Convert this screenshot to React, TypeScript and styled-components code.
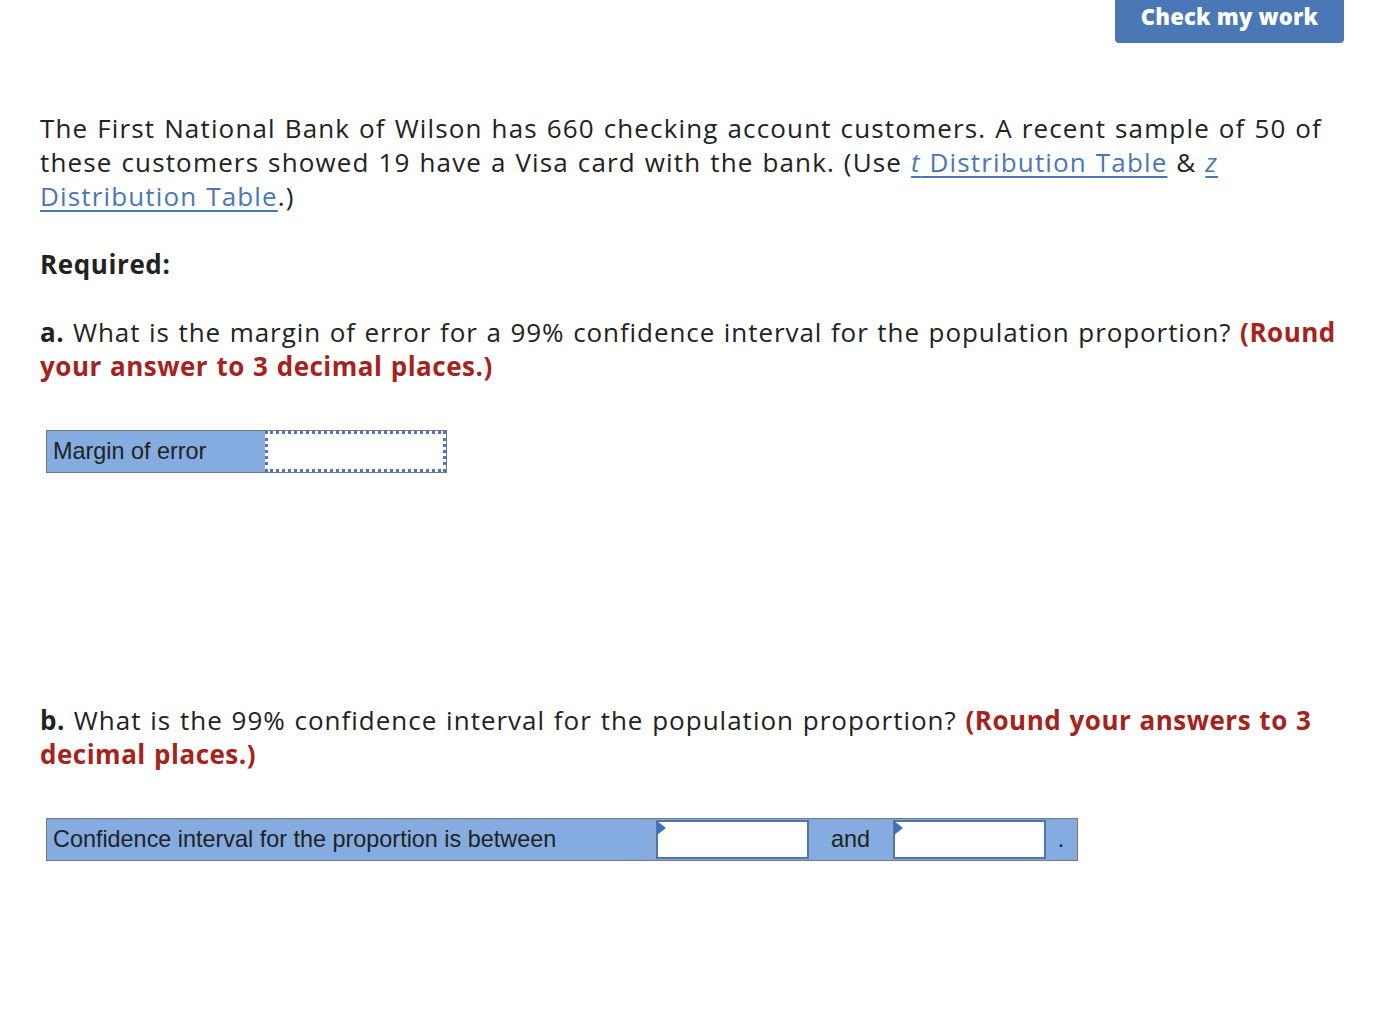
import React from "react";
import styled, { createGlobalStyle } from "styled-components";

const GlobalStyle = createGlobalStyle`
  body {
    margin: 0;
    background: #fff;
    font-family: "Open Sans", Lato, sans-serif;
    color: #222;
  }
`;

const Page = styled.div`
  width: 1380px;
  padding: 0 36px 0 40px;
  box-sizing: border-box;
`;

const TopBar = styled.div`
  display: flex;
  justify-content: flex-end;
`;

const CheckButton = styled.button`
  width: 229px;
  height: 43px;
  background: #4a77b5;
  color: #fff;
  border: none;
  border-radius: 0 0 4px 4px;
  font-family: "Open Sans", sans-serif;
  font-weight: 800;
  font-size: 22px;
  letter-spacing: 0.2px;
  padding: 0 0 12px;
  cursor: pointer;
`;

const Para = styled.p<{ $top?: number; $track?: number }>`
  margin: ${(p) => p.$top ?? 0}px 0 0;
  font-size: 26px;
  line-height: 34px;
  letter-spacing: ${(p) => p.$track ?? 1.15}px;
  word-spacing: 1px;
  white-space: nowrap;
`;

const Lead = styled.strong`
  letter-spacing: 0.6px;
`;

const Link = styled.a`
  color: #4a77b5;
  text-decoration: underline;
  text-underline-offset: 4px;
`;

const Red = styled.strong`
  color: #a6221d;
  font-weight: 700;
  letter-spacing: 0.5px;
`;

const AnswerTable = styled.div<{ $top: number }>`
  display: flex;
  align-items: stretch;
  width: fit-content;
  margin: ${(p) => p.$top}px 0 0 6px;
  border: 1px solid #777;
  background: #84ace0;
  height: 41px;
  font-family: "Liberation Sans", Arial, sans-serif;
  font-size: 23.4px;
  color: #222;
`;

const LabelCell = styled.div<{ $w: number; $center?: boolean }>`
  width: ${(p) => p.$w}px;
  display: flex;
  align-items: center;
  justify-content: ${(p) => (p.$center ? "center" : "flex-start")};
  padding: ${(p) => (p.$center ? "0" : "0 6px")};
  box-sizing: border-box;
  border-right: 1px solid #9ab;
`;

const DottedInput = styled.div`
  width: 181px;
  background: #fff;
  border: 3px dotted #4a77c0;
  box-sizing: border-box;
`;

const BoxInput = styled.div`
  position: relative;
  width: 153px;
  margin: 1px 0;
  background: #fff;
  border: 2px solid #4f74b0;
  box-sizing: border-box;
  &::before {
    content: "";
    position: absolute;
    left: -1px;
    top: -1px;
    border-left: 9px solid #3f6fc0;
    border-top: 7px solid transparent;
    border-bottom: 7px solid transparent;
  }
`;

export default function App() {
  return (
    <>
      <GlobalStyle />
      <Page>
        <TopBar>
          <CheckButton>Check my work</CheckButton>
        </TopBar>
        <Para $top={68}>
          The First National Bank of Wilson has 660 checking account customers. A recent
          sample of 50 of
          <br />
          these customers showed 19 have a Visa card with the bank. (Use{" "}
          <Link href="#">
            <i>t</i> Distribution Table
          </Link>{" "}
          &amp;{" "}
          <Link href="#">
            <i>z</i>
            <br />
            Distribution Table
          </Link>
          .)
        </Para>
        <Para $top={34}>
          <Lead>Required:</Lead>
        </Para>
        <Para $top={34} $track={0.92}>
          <Lead>a.</Lead> What is the margin of error for a 99% confidence interval for the
          population proportion? <Red>(Round</Red>
          <br />
          <Red>your answer to 3 decimal places.)</Red>
        </Para>
        <AnswerTable $top={47}>
          <LabelCell $w={218}>Margin of error</LabelCell>
          <DottedInput />
        </AnswerTable>
        <Para $top={230} $track={1}>
          <Lead>b.</Lead> What is the 99% confidence interval for the population proportion?{" "}
          <Red>(Round your answers to 3</Red>
          <br />
          <Red>decimal places.)</Red>
        </Para>
        <AnswerTable $top={47}>
          <LabelCell $w={609}>Confidence interval for the proportion is between</LabelCell>
          <BoxInput />
          <LabelCell $w={84} $center>
            and
          </LabelCell>
          <BoxInput />
          <LabelCell $w={31} $center>
            .
          </LabelCell>
        </AnswerTable>
      </Page>
    </>
  );
}
